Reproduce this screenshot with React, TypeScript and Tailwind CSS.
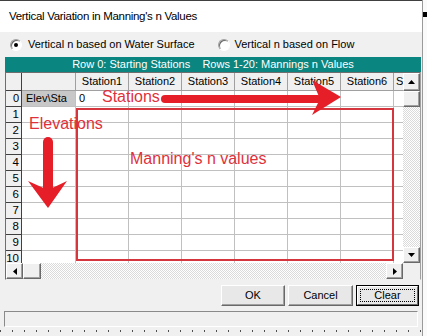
const stations = ["Station1", "Station2", "Station3", "Station4", "Station5", "Station6"];
const rows = [1, 2, 3, 4, 5, 6, 7, 8, 9, 10];

function Radio({ checked }: { checked?: boolean }) {
  return (
    <span className="flex h-[12px] w-[12px] items-center justify-center rounded-full border border-b-white border-l-[#a0a0a0] border-r-white border-t-[#a0a0a0] bg-white shadow-[inset_1px_1px_#696969]">
      {checked && <span className="h-[4px] w-[4px] rounded-full bg-black" />}
    </span>
  );
}

function Tri({ dir }: { dir: "up" | "down" | "left" | "right" }) {
  const pts = {
    up: "0,4 3.5,0 7,4",
    down: "0,0 7,0 3.5,4",
    left: "4,0 4,7 0,3.5",
    right: "0,0 4,3.5 0,7",
  }[dir];
  const v = dir === "up" || dir === "down";
  return (
    <svg width={v ? 7 : 4} height={v ? 4 : 7} viewBox={v ? "0 0 7 4" : "0 0 4 7"}>
      <polygon points={pts} fill="#000" />
    </svg>
  );
}

function ScrollBtn({ dir, className }: { dir?: "up" | "down" | "left" | "right"; className: string }) {
  return (
    <div
      className={
        "flex shrink-0 items-center justify-center border border-b-[#696969] border-l-white border-r-[#696969] border-t-white bg-[#f0f0f0] shadow-[inset_-1px_-1px_#a0a0a0] " +
        className
      }
    >
      {dir && <Tri dir={dir} />}
    </div>
  );
}

function Button({ label, w, primary }: { label: string; w: string; primary?: boolean }) {
  if (primary) {
    return (
      <div className={"h-[21px] border border-black " + w}>
        <div className="flex h-full items-center justify-center border border-b-[#696969] border-l-white border-r-[#696969] border-t-white bg-[#e8e8e8] p-[2px]">
          <div className="flex h-full w-full items-center justify-center border border-dotted border-black">{label}</div>
        </div>
      </div>
    );
  }
  return (
    <div
      className={
        "flex h-[21px] items-center justify-center border border-b-[#696969] border-l-white border-r-[#696969] border-t-white bg-[#e8e8e8] shadow-[inset_-1px_-1px_#a0a0a0] " +
        w
      }
    >
      {label}
    </div>
  );
}

export default function App() {
  return (
    <div className="relative flex h-[336px] w-[427px] overflow-hidden bg-white font-['Liberation_Sans',Arial,sans-serif] text-[11px] text-black">
      {/* WINDOW */}
      <div className="flex w-[423px] flex-col border-r border-[#9a9a9a]">
        <div className="h-px bg-[#404040]" />

        {/* TITLE */}
        <div className="h-[31px] bg-white pl-[9px] text-[11.5px] leading-[31px] tracking-[-0.3px]">
          Vertical Variation in Manning's n Values
        </div>

        {/* BODY */}
        <div className="flex flex-1 flex-col bg-[#f0f0f0]">
          <div className="flex h-[25px] items-center">
            <div className="ml-[10px] flex items-center gap-[6px]">
              <Radio checked />
              <span>Vertical n based on Water Surface</span>
            </div>
            <div className="ml-[23px] flex items-center gap-[5px]">
              <Radio />
              <span>Vertical n based on Flow</span>
            </div>
          </div>

          {/* GRID */}
          <div className="ml-[5px] w-[416px]">
            <div className="h-[15px] bg-[#0b8580] text-center leading-[15px] text-white">
              Row 0: Starting Stations&nbsp;&nbsp;&nbsp; Rows 1-20: Mannings n Values
            </div>

            <div className="flex h-[208px] flex-col border-b border-l border-r border-b-[#f0f0f0] border-l-[#6e6e6e] border-r-[#a0a0a0]">
              <div className="flex h-[191px] border-t border-[#6e6e6e]">
                {/* TABLE */}
                <div className="w-[397px] overflow-hidden bg-white">
                  <div className="flex h-[18px] whitespace-nowrap bg-[#f0f0f0] leading-[17px]">
                    <div className="w-[16px] shrink-0 border-b border-r border-[#404040]" />
                    <div className="w-[54px] shrink-0 border-b border-r border-[#a0a0a0]" />
                    {stations.map((s) => (
                      <div key={s} className="w-[53px] shrink-0 border-b border-r border-[#a0a0a0] text-center">
                        {s}
                      </div>
                    ))}
                    <div className="w-[53px] shrink-0 border-b border-[#a0a0a0] pl-[2px]">S</div>
                  </div>

                  <div className="flex h-[16px] whitespace-nowrap leading-[15px]">
                    <div className="w-[16px] shrink-0 border-b border-r border-[#404040] bg-[#f0f0f0] pr-[2px] text-right">0</div>
                    <div className="w-[54px] shrink-0 border-b border-r border-[#c0c0c0] bg-[#c8c8c8] pl-[4px]">Elev\Sta</div>
                    {stations.map((s, i) => (
                      <div key={s} className="w-[53px] shrink-0 border-b border-r border-[#c0c0c0] pl-[3px]">
                        {i === 0 ? "0" : ""}
                      </div>
                    ))}
                    <div className="w-[53px] shrink-0 border-b border-[#c0c0c0]" />
                  </div>

                  {rows.map((r) => (
                    <div key={r} className="flex h-[16px] leading-[15px]">
                      <div className="w-[16px] shrink-0 border-b border-r border-[#404040] bg-[#f0f0f0] pr-[2px] text-right text-[11.5px]">
                        {r}
                      </div>
                      <div className="w-[54px] shrink-0 border-b border-r border-[#c0c0c0]" />
                      {stations.map((s) => (
                        <div key={s} className="w-[53px] shrink-0 border-b border-r border-[#c0c0c0]" />
                      ))}
                      <div className="w-[53px] shrink-0 border-b border-[#c0c0c0]" />
                    </div>
                  ))}
                </div>

                {/* VERTICAL SCROLL */}
                <div className="flex w-[17px] flex-col">
                  <ScrollBtn dir="up" className="h-[18px] w-[17px]" />
                  <ScrollBtn className="h-[16px] w-[17px]" />
                  <div className="flex-1 bg-[repeating-conic-gradient(#ffffff_0_25%,#dadada_0_50%)] bg-[length:2px_2px]" />
                  <ScrollBtn dir="down" className="h-[16px] w-[17px]" />
                </div>
              </div>

              {/* HORIZONTAL SCROLL */}
              <div className="flex h-[16px]">
                <ScrollBtn dir="left" className="h-[16px] w-[17px]" />
                <ScrollBtn className="h-[16px] w-[18px]" />
                <div className="flex-1 bg-[repeating-conic-gradient(#ffffff_0_25%,#dadada_0_50%)] bg-[length:2px_2px]" />
                <ScrollBtn dir="right" className="h-[16px] w-[17px]" />
                <div className="w-[17px] bg-[#f0f0f0]" />
              </div>
            </div>
          </div>

          {/* BUTTONS */}
          <div className="mt-[5px] flex justify-end gap-[3px] pr-[3px]">
            <Button label="OK" w="w-[64px]" />
            <Button label="Cancel" w="w-[65px]" />
            <Button label="Clear" w="w-[63px]" primary />
          </div>

          {/* STATUS */}
          <div className="mx-[4px] mt-[5px] h-[16px] border border-b-white border-l-[#8a8a8a] border-r-white border-t-[#8a8a8a]" />

          <div className="mt-[3px] h-[2px] bg-[repeating-linear-gradient(90deg,#505050_0_1px,transparent_1px_12px)]" />
        </div>
      </div>

      {/* RIGHT EDGE */}
      <div className="flex-1 bg-[#fafafa] pt-[12px]">
        <div className="h-[5px] bg-black" />
      </div>

      {/* ANNOTATIONS */}
      <svg className="pointer-events-none absolute left-0 top-0" width="427" height="336" viewBox="0 0 427 336">
        <rect x="77" y="109" width="316" height="151" fill="none" stroke="#d5353d" strokeWidth="2" />
        <line x1="165" y1="99" x2="318" y2="99" stroke="#e61e28" strokeWidth="8" strokeLinecap="round" />
        <polygon points="312,80 341,97 312,115 320,99" fill="#e61e28" />
        <line x1="48" y1="142" x2="48" y2="190" stroke="#e61e28" strokeWidth="10" strokeLinecap="round" />
        <polygon points="28,181 48,190 67,181 48,208" fill="#e61e28" />
      </svg>
      <span className="pointer-events-none absolute left-[102px] top-[89px] text-[16px] leading-none text-[#e0313b]">
        Stations
      </span>
      <span className="pointer-events-none absolute left-[29px] top-[116px] text-[16px] leading-none text-[#e0313b]">
        Elevations
      </span>
      <span className="pointer-events-none absolute left-[130px] top-[151px] text-[16px] leading-none text-[#e0313b]">
        Manning's n values
      </span>
    </div>
  );
}
